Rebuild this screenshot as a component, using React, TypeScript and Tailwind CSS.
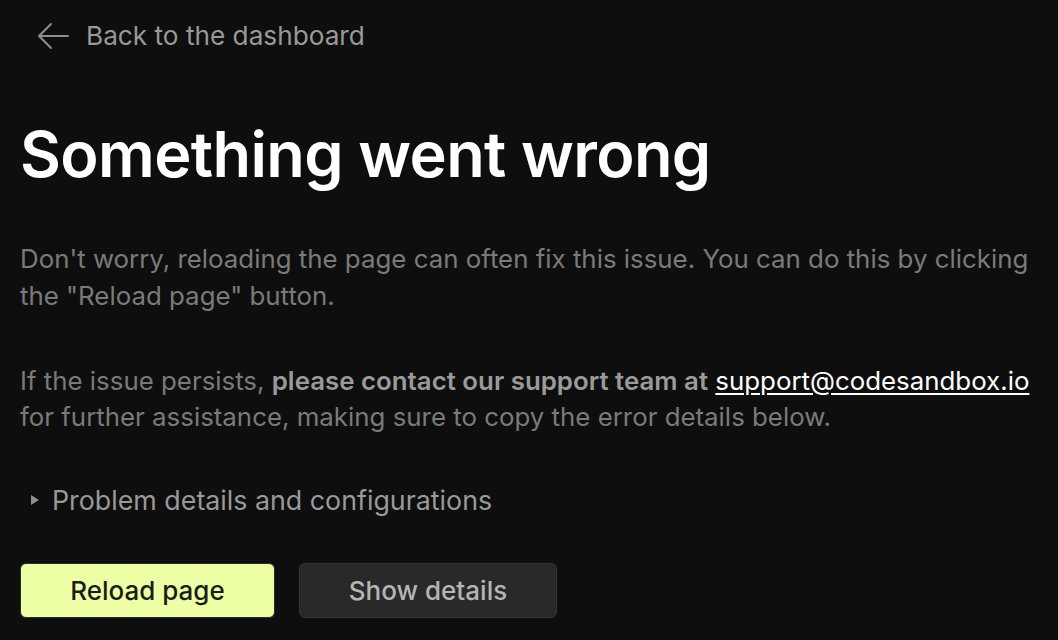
export default function App() {
  return (
    <div
      className="min-h-screen w-full bg-[#0e0e0e] pl-5 pr-4 text-[#7a7a7a] antialiased"
      style={{ fontFamily: "Inter, 'Noto Sans', sans-serif" }}
    >
      <div className="flex h-[72px] items-center gap-4 pl-4">
        <svg width="34" height="28" viewBox="0 0 34 28" fill="none" stroke="#8f8f8f" strokeWidth="2" strokeLinecap="round" strokeLinejoin="round">
          <path d="M32 14H3M15 2 3 14l12 12" />
        </svg>
        <span className="text-[26.2px] text-[#999999]">Back to the dashboard</span>
      </div>

      <h1 className="mt-[42px] text-[63px] font-semibold leading-[80px] tracking-[-0.01em] text-white">
        Something went wrong
      </h1>

      <p className="mt-[46px] text-[25.85px] leading-[37px]">
        Don't worry, reloading the page can often fix this issue. You can do this by clicking the "Reload page" button.
      </p>

      <p className="mt-[49px] text-[25.85px] leading-[36px]">
        If the issue persists, <strong className="font-semibold text-[#9a9a9a]">please contact our support team at</strong>{" "}
        <a href="#" className="text-white underline underline-offset-[3px]">support@codesandbox.io</a> for further assistance, making sure to copy the error details below.
      </p>

      <div className="mt-[45px] flex items-center gap-3 pl-2.5 text-[26.8px] text-[#999999]">
        <svg width="10" height="12" viewBox="0 0 10 12" fill="#8f8f8f">
          <path d="M1 1v10l8-5z" />
        </svg>
        <span>Problem details and configurations</span>
      </div>

      <div className="mt-[43px] flex gap-6">
        <button className="h-[55px] w-[255px] rounded-md border-[1.5px] border-[#2b2b2b] bg-[#edffa5] text-[26px] font-medium text-[#1c1c1c]">
          Reload page
        </button>
        <button className="h-[55px] w-[258px] rounded-md border border-[#333333] bg-[#292929] text-[26px] font-medium text-[#b5b5b5]">
          Show details
        </button>
      </div>
    </div>
  );
}
